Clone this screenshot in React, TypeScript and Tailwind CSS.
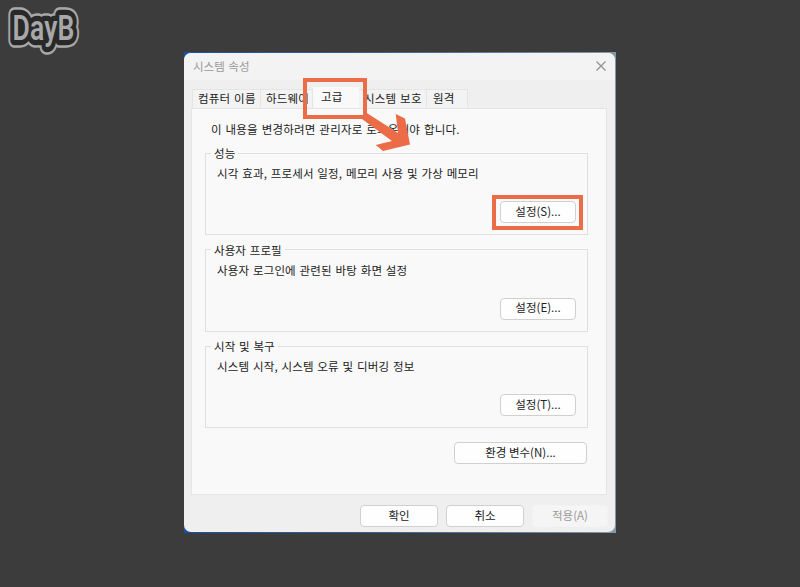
import type { ReactNode } from 'react';

function Logo() {
  const text = {
    x: 12.5,
    y: 39.5,
    textLength: 62,
    lengthAdjust: 'spacingAndGlyphs' as const,
    fontSize: 34.5,
    fontWeight: 600,
    strokeLinejoin: 'round' as const,
  };

  return (
    <svg className="absolute top-0 left-0 font-['Roboto',sans-serif]" width="100" height="60">
      <text {...text} fill="#a8a8a8" stroke="#a8a8a8" strokeWidth="15.5">DayB</text>
      <text {...text} fill="#292929" stroke="#292929" strokeWidth="10.5">DayB</text>
      <text {...text} fill="#a8a8a8">DayB</text>
    </svg>
  );
}

function Button({ className, children }: { className: string; children: ReactNode }) {
  return (
    <button
      className={`flex h-[22px] items-center justify-center rounded-[4px] border pb-[3px] tracking-normal whitespace-nowrap ${className}`}
    >
      {children}
    </button>
  );
}

function Tab({ className, children }: { className: string; children: ReactNode }) {
  return (
    <div className={`h-[19px] shrink-0 border-t border-r border-[#e5e5e5] bg-[#f3f3f3] whitespace-nowrap ${className}`}>
      {children}
    </div>
  );
}

function Group({ title, text, button, highlight }: { title: string; text: string; button: string; highlight?: boolean }) {
  return (
    <fieldset className="h-[89px] w-[383px] border border-[#dfdfdf] pl-[5px]">
      <legend className="h-[14px] px-[3px] leading-[14px] tracking-[0.1px]">{title}</legend>
      <p className="mt-[5.2px] pl-[6px] leading-[16px] tracking-[0.15px]">{text}</p>
      <div className="mt-[20.1px] flex justify-end pr-[11px]">
        <div className="relative">
          <Button className="w-[76px] border-[#d0d0d0] bg-[#fefefe]">{button}</Button>
          {highlight && <div className="absolute -top-[6px] -left-[8px] h-[35px] w-[91px] border-4 border-[#eb6c47]" />}
        </div>
      </div>
    </fieldset>
  );
}

export default function App() {
  return (
    <main className="relative h-[587px] w-[800px] overflow-hidden bg-[#3c3c3c] pt-[52px] pl-[184px] font-['Noto_Sans_CJK_KR',sans-serif] text-[11.5px] leading-[16px] tracking-[0.2px] text-[#222] [word-spacing:1px]">
      <Logo />
      <div className="h-[481px] w-[432px] bg-linear-to-r from-[#174fae] from-0% via-[#3c5a8c] via-40% to-[#8299a8] pt-px pr-px pb-px">
        <section className="h-[479px] rounded-[7px] bg-[#efefef]">
          <header className="flex h-[27px] items-center justify-between rounded-t-[7px] bg-[#f3f3f3] pr-[9px] pb-[2px] pl-[9px] text-[#999]">
            <span className="tracking-normal">시스템 속성</span>
            <svg width="10" height="10" stroke="#8f8f8f" strokeWidth="1.2">
              <path d="M0.5 0.5 9.5 9.5M9.5 0.5 0.5 9.5" />
            </svg>
          </header>

          <nav className="flex h-[28px] items-end pl-[8px]">
            <Tab className="w-[69px] border-l pl-[5px]">컴퓨터 이름</Tab>
            <Tab className="w-[52px] overflow-hidden pl-[5px]">하드웨어</Tab>
            <div className="h-[21px] w-[46px] bg-[#f9f9f9] pt-px pl-[8px]">고급</div>
            <Tab className="w-[68px] pl-[5px]">시스템 보호</Tab>
            <Tab className="w-[41px] pl-[6px]">원격</Tab>
          </nav>

          <div className="ml-[7px] h-[387px] w-[416px] border border-[#e5e5e5] bg-[#f9f9f9] pt-[12px] pl-[13px]">
            <p className="mb-[9px] pl-[6px]">이 내용을 변경하려면 관리자로 로그온해야 합니다.</p>
            <div className="flex flex-col gap-[7.5px]">
              <Group title="성능" text="시각 효과, 프로세서 일정, 메모리 사용 및 가상 메모리" button="설정(S)..." highlight />
              <Group title="사용자 프로필" text="사용자 로그인에 관련된 바탕 화면 설정" button="설정(E)..." />
              <Group title="시작 및 복구" text="시스템 시작, 시스템 오류 및 디버깅 정보" button="설정(T)..." />
            </div>
            <div className="mt-[14px] flex justify-end pr-[19px]">
              <Button className="w-[133px] border-[#d0d0d0] bg-[#fefefe]">환경 변수(N)...</Button>
            </div>
          </div>

          <footer className="mt-[10px] flex justify-end gap-[8px] pr-[7px]">
            <Button className="w-[78px] border-[#d0d0d0] bg-[#fefefe]">확인</Button>
            <Button className="w-[78px] border-[#d0d0d0] bg-[#fefefe]">취소</Button>
            <Button className="w-[76px] border-[#f3f3f3] bg-[#f5f5f5] text-[#999]">적용(A)</Button>
          </footer>
        </section>
      </div>

      {/* callout around the advanced tab */}
      <div className="absolute top-[78px] left-[303px] h-[41px] w-[64px] border-4 border-[#eb6c47]" />
      <svg className="absolute top-[110px] left-[360px]" width="55" height="45" fill="#eb6c47">
        <path d="M6 2.500 38 23 35.700 4 45 8.500 50 34.500 23 41 15.700 35 32 31 2 9Z" />
      </svg>
    </main>
  );
}
